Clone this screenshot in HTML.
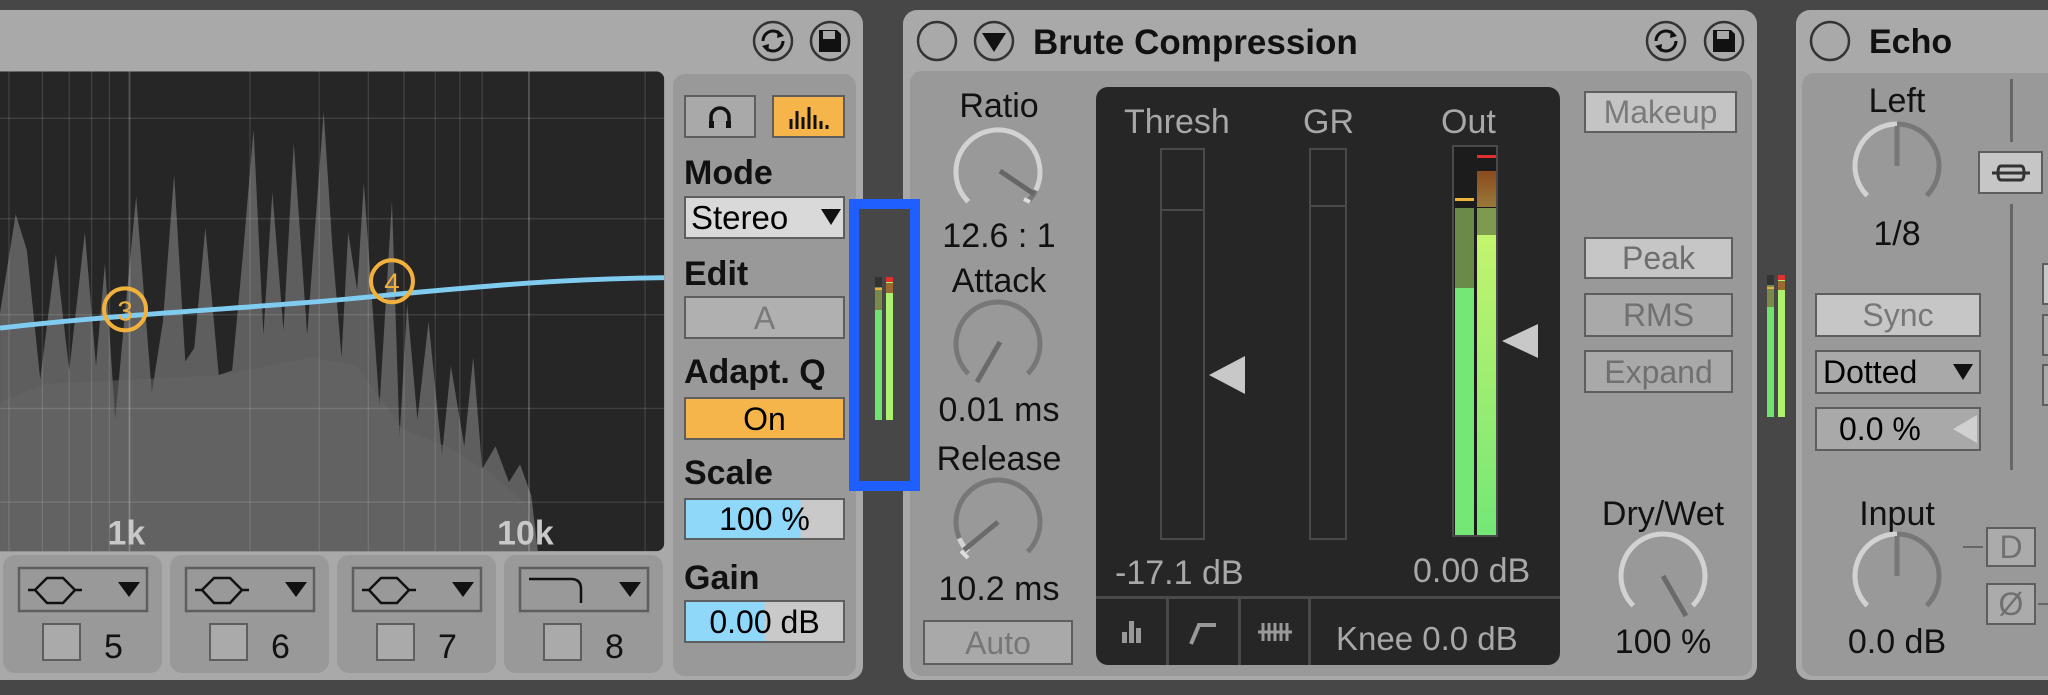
<!DOCTYPE html>
<html><head><meta charset="utf-8">
<style>
*{margin:0;padding:0;box-sizing:border-box}
body{width:2048px;height:695px;background:#474747;position:relative;overflow:hidden;font-family:"Liberation Sans",sans-serif;}
.a{position:absolute}
.t{position:absolute;white-space:nowrap;line-height:1;font-size:34px;color:#111}
.b{font-weight:bold}
.btn{position:absolute;border:2px solid #5e5e5e;display:flex;align-items:center;justify-content:center;font-size:32px;line-height:1;white-space:nowrap}
svg{position:absolute;overflow:visible}
</style></head><body>

<!-- Panel 1 -->
<div class="a" style="left:-20px;top:10px;width:883px;height:670px;background:#a9a9a9;border-radius:14px"></div>
<svg style="left:751px;top:19px" width="44" height="44" viewBox="0 0 44 44"><circle cx="22" cy="22" r="19" fill="#a9a9a9" stroke="#333" stroke-width="2.5"/><path d="M12 22 A10 10 0 0 1 30 16 M32 22 A10 10 0 0 1 14 28" fill="none" stroke="#111" stroke-width="3"/><path d="M27 11 L33 17 L26 19Z M17 33 L11 27 L18 25Z" fill="#111"/></svg>
<svg style="left:808px;top:19px" width="44" height="44" viewBox="0 0 44 44"><circle cx="22" cy="22" r="19" fill="#a9a9a9" stroke="#333" stroke-width="2.5"/><path d="M11 11 H29 L33 15 V33 H11Z" fill="#111"/><rect x="15" y="12" width="12" height="8" fill="#a9a9a9"/></svg>

<!-- EQ display -->
<svg style="left:0;top:0" width="700" height="695" viewBox="0 0 1568 1557">
<defs><clipPath id="eqc"><rect x="-40" y="160" width="1528" height="1075" rx="18"/></clipPath></defs>
<g clip-path="url(#eqc)">
<rect x="-40" y="160" width="1528" height="1075" fill="#262626"/>
<polygon fill="#5e5e5e" points="0,700 35,480 60,560 90,850 125,570 155,830 190,520 215,820 235,590 258,940 280,700 305,440 340,880 365,720 390,390 415,810 435,780 460,510 490,840 520,830 545,560 568,290 590,750 610,430 635,740 658,320 688,750 725,250 745,560 765,800 780,520 800,650 815,410 850,910 878,450 895,980 912,680 935,940 960,720 990,1020 1010,820 1040,1000 1060,800 1080,1050 1110,1000 1140,1080 1165,1040 1190,1110 1205,1235 0,1235"/>
<polygon fill="#666" opacity="0.5" points="0,900 100,860 300,850 500,840 700,800 800,820 900,960 1000,1000 1100,1060 1180,1130 1205,1235 0,1235"/>
<g stroke="rgba(255,255,255,0.12)" stroke-width="3">
<line x1="20" y1="160" x2="20" y2="1235"/><line x1="95" y1="160" x2="95" y2="1235"/><line x1="155" y1="160" x2="155" y2="1235"/><line x1="205" y1="160" x2="205" y2="1235"/><line x1="245" y1="160" x2="245" y2="1235"/>
<line x1="560" y1="160" x2="560" y2="1235"/><line x1="715" y1="160" x2="715" y2="1235"/><line x1="825" y1="160" x2="825" y2="1235"/><line x1="905" y1="160" x2="905" y2="1235"/><line x1="975" y1="160" x2="975" y2="1235"/><line x1="1030" y1="160" x2="1030" y2="1235"/><line x1="1080" y1="160" x2="1080" y2="1235"/><line x1="1445" y1="160" x2="1445" y2="1235"/>
<line x1="0" y1="265" x2="1488" y2="265"/><line x1="0" y1="490" x2="1488" y2="490"/><line x1="0" y1="705" x2="1488" y2="705"/><line x1="0" y1="915" x2="1488" y2="915"/><line x1="0" y1="1125" x2="1488" y2="1125"/>
</g>
<g stroke="rgba(255,255,255,0.22)" stroke-width="4"><line x1="290" y1="160" x2="290" y2="1235"/><line x1="1185" y1="160" x2="1185" y2="1235"/></g>
<path d="M0 735 C300 700 600 690 878 660 C1100 640 1250 625 1488 622" fill="none" stroke="#80ccf0" stroke-width="11"/>
<circle cx="280" cy="693" r="47" fill="none" stroke="#f2b13c" stroke-width="9"/>
<circle cx="878" cy="630" r="47" fill="none" stroke="#f2b13c" stroke-width="9"/>
<text x="280" y="718" font-size="62" fill="#f2b13c" text-anchor="middle" font-family="Liberation Sans">3</text>
<text x="878" y="655" font-size="62" fill="#f2b13c" text-anchor="middle" font-family="Liberation Sans">4</text>
<text x="283" y="1220" font-size="76" fill="#c8c8c8" text-anchor="middle" font-weight="bold" font-family="Liberation Sans">1k</text>
<text x="1177" y="1220" font-size="76" fill="#c8c8c8" text-anchor="middle" font-weight="bold" font-family="Liberation Sans">10k</text>
</g>
</svg>

<!-- band boxes -->
<div class="a" style="left:3px;top:555px;width:159px;height:118px;background:#999;border-radius:12px"></div>
<div class="a" style="left:170px;top:555px;width:159px;height:118px;background:#999;border-radius:12px"></div>
<div class="a" style="left:337px;top:555px;width:159px;height:118px;background:#999;border-radius:12px"></div>
<div class="a" style="left:504px;top:555px;width:159px;height:118px;background:#999;border-radius:12px"></div>

<svg style="left:18px;top:567px" width="130" height="45" viewBox="0 0 130 45"><rect x="1" y="1" width="128" height="43" fill="#999" stroke="#5e5e5e" stroke-width="2.5"/><path d="M10 23 H17 L29 11 H45 L57 23 L45 36 H29 L17 23 M57 23 H64" fill="none" stroke="#111" stroke-width="2.5"/><path d="M100 15 H122 L111 30Z" fill="#111"/></svg>
<svg style="left:185px;top:567px" width="130" height="45" viewBox="0 0 130 45"><rect x="1" y="1" width="128" height="43" fill="#999" stroke="#5e5e5e" stroke-width="2.5"/><path d="M10 23 H17 L29 11 H45 L57 23 L45 36 H29 L17 23 M57 23 H64" fill="none" stroke="#111" stroke-width="2.5"/><path d="M100 15 H122 L111 30Z" fill="#111"/></svg>
<svg style="left:352px;top:567px" width="130" height="45" viewBox="0 0 130 45"><rect x="1" y="1" width="128" height="43" fill="#999" stroke="#5e5e5e" stroke-width="2.5"/><path d="M10 23 H17 L29 11 H45 L57 23 L45 36 H29 L17 23 M57 23 H64" fill="none" stroke="#111" stroke-width="2.5"/><path d="M100 15 H122 L111 30Z" fill="#111"/></svg>
<svg style="left:519px;top:567px" width="130" height="45" viewBox="0 0 130 45"><rect x="1" y="1" width="128" height="43" fill="#999" stroke="#5e5e5e" stroke-width="2.5"/><path d="M10 12 H52 Q62 12 62 22 V36" fill="none" stroke="#111" stroke-width="2.5"/><path d="M100 15 H122 L111 30Z" fill="#111"/></svg>

<div class="a" style="left:42px;top:623px;width:39px;height:38px;background:#aaa;border:2px solid #5e5e5e"></div>
<div class="a" style="left:209px;top:623px;width:39px;height:38px;background:#aaa;border:2px solid #5e5e5e"></div>
<div class="a" style="left:376px;top:623px;width:39px;height:38px;background:#aaa;border:2px solid #5e5e5e"></div>
<div class="a" style="left:543px;top:623px;width:39px;height:38px;background:#aaa;border:2px solid #5e5e5e"></div>
<div class="t" style="left:104px;top:630px;font-size:34px">5</div>
<div class="t" style="left:271px;top:630px;font-size:34px">6</div>
<div class="t" style="left:438px;top:630px;font-size:34px">7</div>
<div class="t" style="left:605px;top:630px;font-size:34px">8</div>

<!-- right column panel1 -->
<div class="a" style="left:673px;top:74px;width:183px;height:602px;background:#999;border-radius:12px"></div>
<div class="btn" style="left:684px;top:95px;width:72px;height:43px;background:#a9a9a9"></div>
<svg style="left:705px;top:102px" width="30" height="30" viewBox="0 0 30 30"><path d="M6 24 V15 A9 9 0 0 1 24 15 V24" fill="none" stroke="#111" stroke-width="3.5"/><rect x="4" y="19" width="5" height="7" fill="#111"/><rect x="21" y="19" width="5" height="7" fill="#111"/></svg>
<div class="btn" style="left:772px;top:95px;width:73px;height:43px;background:#f5b54a"></div>
<svg style="left:787px;top:103px" width="44" height="28" viewBox="0 0 44 28"><g stroke="#111" stroke-width="3"><line x1="4" y1="26" x2="4" y2="16"/><line x1="10" y1="26" x2="10" y2="8"/><line x1="16" y1="26" x2="16" y2="14"/><line x1="22" y1="26" x2="22" y2="4"/><line x1="28" y1="26" x2="28" y2="12"/><line x1="34" y1="26" x2="34" y2="18"/><line x1="40" y1="26" x2="40" y2="22"/></g></svg>
<div class="t b" style="left:684px;top:156px">Mode</div>
<div class="btn" style="left:684px;top:196px;width:161px;height:43px;background:#d9d9d9;justify-content:flex-start;padding-left:5px;font-size:33px">Stereo</div>
<svg style="left:820px;top:208px" width="22" height="18"><path d="M1 1 H21 L11 17Z" fill="#111"/></svg>
<div class="t b" style="left:684px;top:257px">Edit</div>
<div class="btn" style="left:684px;top:296px;width:161px;height:43px;background:#b0b0b0;color:#7a7a7a">A</div>
<div class="t b" style="left:684px;top:355px">Adapt. Q</div>
<div class="btn" style="left:684px;top:397px;width:161px;height:43px;background:#f5b54a">On</div>
<div class="t b" style="left:684px;top:456px">Scale</div>
<div class="btn" style="left:684px;top:498px;width:161px;height:42px;background:linear-gradient(90deg,#8fd8fa 0 73%,#c9c9c9 73%)">100 %</div>
<div class="t b" style="left:684px;top:561px">Gain</div>
<div class="btn" style="left:684px;top:600px;width:161px;height:43px;background:linear-gradient(90deg,#8fd8fa 0 50%,#c9c9c9 50%)">0.00 dB</div>

<!-- Panel 2 -->
<div class="a" style="left:903px;top:10px;width:854px;height:670px;background:#a9a9a9;border-radius:14px"></div>
<div class="a" style="left:910px;top:71px;width:842px;height:605px;background:#999;border-radius:12px"></div>
<svg style="left:915px;top:19px" width="44" height="44" viewBox="0 0 44 44"><circle cx="22" cy="22" r="19" fill="#a9a9a9" stroke="#333" stroke-width="2.5"/></svg>
<svg style="left:972px;top:19px" width="44" height="44" viewBox="0 0 44 44"><circle cx="22" cy="22" r="19" fill="#a9a9a9" stroke="#333" stroke-width="2.5"/><path d="M10 14 H34 L22 33Z" fill="#111"/></svg>
<div class="t b" style="left:1033px;top:25px;font-size:35px">Brute Compression</div>
<svg style="left:1644px;top:19px" width="44" height="44" viewBox="0 0 44 44"><circle cx="22" cy="22" r="19" fill="#a9a9a9" stroke="#333" stroke-width="2.5"/><path d="M12 22 A10 10 0 0 1 30 16 M32 22 A10 10 0 0 1 14 28" fill="none" stroke="#111" stroke-width="3"/><path d="M27 11 L33 17 L26 19Z M17 33 L11 27 L18 25Z" fill="#111"/></svg>
<svg style="left:1702px;top:19px" width="44" height="44" viewBox="0 0 44 44"><circle cx="22" cy="22" r="19" fill="#a9a9a9" stroke="#333" stroke-width="2.5"/><path d="M11 11 H29 L33 15 V33 H11Z" fill="#111"/><rect x="15" y="12" width="12" height="8" fill="#a9a9a9"/></svg>

<!-- meter in blue box (on top of panel edge) -->
<div class="a" style="left:856px;top:206px;width:57px;height:278px;background:#474747"></div>
<div class="a" style="left:875px;top:277px;width:7px;height:143px;background:#6fe26f"></div>
<div class="a" style="left:875px;top:277px;width:7px;height:33px;background:#7a8a4a"></div>
<div class="a" style="left:875px;top:277px;width:7px;height:10px;background:#333"></div>
<div class="a" style="left:875px;top:288px;width:7px;height:2px;background:#e9b23a"></div>
<div class="a" style="left:886px;top:277px;width:7px;height:143px;background:#aef06f"></div>
<div class="a" style="left:886px;top:277px;width:7px;height:5px;background:#e03030"></div>
<div class="a" style="left:886px;top:283px;width:7px;height:10px;background:#9a6a30"></div>
<div class="a" style="left:849px;top:199px;width:71px;height:292px;border:10px solid #1f5fff"></div>

<!-- knobs column -->
<div class="t" style="left:949px;top:89px;width:100px;text-align:center">Ratio</div>
<svg style="left:948px;top:122px" width="100" height="100" viewBox="0 0 100 100"><path d="M20.3 79.7 A42 42 0 1 1 87.7 68.4" fill="none" stroke="#d2d2d2" stroke-width="5"/><path d="M87.7 68.4 A42 42 0 0 1 79.7 79.7" fill="none" stroke="#777" stroke-width="5"/><line x1="52" y1="49" x2="86" y2="72" stroke="#666" stroke-width="5"/><line x1="76" y1="77" x2="82" y2="80" stroke="#ddd" stroke-width="4"/></svg>
<div class="t" style="left:939px;top:219px;width:120px;text-align:center">12.6 : 1</div>
<div class="t" style="left:939px;top:264px;width:120px;text-align:center">Attack</div>
<svg style="left:948px;top:294px" width="100" height="100" viewBox="0 0 100 100"><path d="M20.3 79.7 A42 42 0 1 1 79.7 79.7" fill="none" stroke="#777" stroke-width="5"/><line x1="52" y1="48" x2="29" y2="88" stroke="#6a6a6a" stroke-width="5"/></svg>
<div class="t" style="left:929px;top:393px;width:140px;text-align:center">0.01 ms</div>
<div class="t" style="left:929px;top:442px;width:140px;text-align:center">Release</div>
<svg style="left:948px;top:472px" width="100" height="100" viewBox="0 0 100 100"><path d="M20.3 79.7 A42 42 0 1 1 79.7 79.7" fill="none" stroke="#777" stroke-width="5"/><path d="M20.3 79.7 A42 42 0 0 1 11.3 66.4" fill="none" stroke="#d2d2d2" stroke-width="5"/><line x1="50" y1="50" x2="16" y2="78" stroke="#6a6a6a" stroke-width="5"/><line x1="13" y1="79" x2="20" y2="86" stroke="#ddd" stroke-width="4"/></svg>
<div class="t" style="left:929px;top:572px;width:140px;text-align:center">10.2 ms</div>
<div class="btn" style="left:923px;top:620px;width:150px;height:45px;background:#a9a9a9;color:#777">Auto</div>

<!-- display -->
<div class="a" style="left:1096px;top:87px;width:464px;height:578px;background:#262626;border-radius:12px"></div>
<div class="t" style="left:1124px;top:105px;color:#a8a8a8">Thresh</div>
<div class="t" style="left:1303px;top:105px;color:#a8a8a8">GR</div>
<div class="t" style="left:1441px;top:105px;color:#a8a8a8">Out</div>
<div class="a" style="left:1160px;top:148px;width:45px;height:392px;border:2px solid #4a4a4a"></div>
<div class="a" style="left:1162px;top:209px;width:41px;height:2px;background:#4a4a4a"></div>
<div class="a" style="left:1309px;top:148px;width:38px;height:392px;border:2px solid #4a4a4a"></div>
<div class="a" style="left:1311px;top:205px;width:34px;height:2px;background:#4a4a4a"></div>
<svg style="left:1209px;top:356px" width="36" height="38"><path d="M0 19 L36 0 V38Z" fill="#c8c8c8"/></svg>
<div class="a" style="left:1452px;top:145px;width:46px;height:392px;border:2px solid #4a4a4a;background:#1c1c1c"></div>
<div class="a" style="left:1455px;top:208px;width:19px;height:327px;background:#6a8a4a"></div>
<div class="a" style="left:1455px;top:288px;width:19px;height:247px;background:#74e776"></div>
<div class="a" style="left:1455px;top:198px;width:19px;height:3px;background:#f0b33a"></div>
<div class="a" style="left:1477px;top:155px;width:19px;height:3px;background:#e03030"></div>
<div class="a" style="left:1477px;top:171px;width:19px;height:36px;background:linear-gradient(#8a4a1e,#9a7a3a)"></div>
<div class="a" style="left:1477px;top:208px;width:19px;height:327px;background:#7e9a4e"></div>
<div class="a" style="left:1477px;top:235px;width:19px;height:300px;background:linear-gradient(#c4f46e,#74e776)"></div>
<svg style="left:1502px;top:324px" width="36" height="34"><path d="M0 17 L36 0 V34Z" fill="#c8c8c8"/></svg>
<div class="t" style="left:1115px;top:556px;color:#a8a8a8">-17.1 dB</div>
<div class="t" style="left:1413px;top:554px;color:#a8a8a8">0.00 dB</div>
<div class="a" style="left:1096px;top:596px;width:464px;height:3px;background:#4a4a4a"></div>
<div class="a" style="left:1166px;top:599px;width:3px;height:66px;background:#4a4a4a"></div>
<div class="a" style="left:1238px;top:599px;width:3px;height:66px;background:#4a4a4a"></div>
<div class="a" style="left:1308px;top:599px;width:3px;height:66px;background:#4a4a4a"></div>
<svg style="left:1120px;top:618px" width="24" height="26"><g fill="#999"><rect x="2" y="14" width="5" height="11"/><rect x="9" y="3" width="5" height="22"/><rect x="16" y="10" width="5" height="15"/></g></svg>
<svg style="left:1188px;top:620px" width="30" height="26"><path d="M3 24 L11 5 H28" fill="none" stroke="#999" stroke-width="4"/></svg>
<svg style="left:1257px;top:620px" width="36" height="24"><g stroke="#999" stroke-width="3"><line x1="1" y1="12" x2="35" y2="12"/><line x1="6" y1="3" x2="6" y2="21"/><line x1="12" y1="3" x2="12" y2="21"/><line x1="18" y1="3" x2="18" y2="21"/><line x1="24" y1="3" x2="24" y2="21"/><line x1="30" y1="3" x2="30" y2="21"/></g></svg>
<div class="t" style="left:1336px;top:622px;color:#a8a8a8;font-size:33px">Knee 0.0 dB</div>

<!-- right buttons -->
<div class="btn" style="left:1584px;top:91px;width:153px;height:42px;background:#c4c4c4;color:#7a7a7a">Makeup</div>
<div class="btn" style="left:1584px;top:237px;width:149px;height:42px;background:#c6c6c6;color:#6e6e6e">Peak</div>
<div class="btn" style="left:1584px;top:293px;width:149px;height:44px;background:#a9a9a9;color:#707070">RMS</div>
<div class="btn" style="left:1584px;top:350px;width:149px;height:43px;background:#a9a9a9;color:#707070">Expand</div>
<div class="t" style="left:1588px;top:497px;width:150px;text-align:center">Dry/Wet</div>
<svg style="left:1613px;top:526px" width="100" height="100" viewBox="0 0 100 100"><path d="M20.3 79.7 A42 42 0 1 1 79.7 79.7" fill="none" stroke="#d2d2d2" stroke-width="5"/><line x1="50" y1="50" x2="73" y2="90" stroke="#6a6a6a" stroke-width="5"/></svg>
<div class="t" style="left:1603px;top:625px;width:120px;text-align:center">100 %</div>

<!-- small meter -->
<div class="a" style="left:1767px;top:275px;width:7px;height:142px;background:#6fe26f"></div>
<div class="a" style="left:1767px;top:275px;width:7px;height:32px;background:#7a8a4a"></div>
<div class="a" style="left:1767px;top:275px;width:7px;height:10px;background:#333"></div>
<div class="a" style="left:1767px;top:287px;width:7px;height:2px;background:#e9b23a"></div>
<div class="a" style="left:1778px;top:275px;width:7px;height:142px;background:#aef06f"></div>
<div class="a" style="left:1778px;top:275px;width:7px;height:5px;background:#e03030"></div>
<div class="a" style="left:1778px;top:281px;width:7px;height:9px;background:#9a6a30"></div>

<!-- Panel 3 Echo -->
<div class="a" style="left:1796px;top:10px;width:300px;height:670px;background:#a9a9a9;border-radius:14px"></div>
<div class="a" style="left:1802px;top:73px;width:290px;height:603px;background:#999;border-radius:12px"></div>
<svg style="left:1808px;top:19px" width="44" height="44" viewBox="0 0 44 44"><circle cx="22" cy="22" r="19" fill="#a9a9a9" stroke="#333" stroke-width="2.5"/></svg>
<div class="t b" style="left:1869px;top:25px;font-size:34px">Echo</div>
<div class="t" style="left:1847px;top:84px;width:100px;text-align:center">Left</div>
<svg style="left:1847px;top:116px" width="100" height="100" viewBox="0 0 100 100"><path d="M20.3 79.7 A42 42 0 0 1 50 8" fill="none" stroke="#d2d2d2" stroke-width="5"/><path d="M50 8 A42 42 0 0 1 79.7 79.7" fill="none" stroke="#777" stroke-width="5"/><line x1="50" y1="10" x2="50" y2="50" stroke="#777" stroke-width="5"/></svg>
<div class="t" style="left:1847px;top:217px;width:100px;text-align:center">1/8</div>
<div class="a" style="left:2010px;top:79px;width:3px;height:63px;background:#666"></div>
<div class="a" style="left:2010px;top:204px;width:3px;height:266px;background:#666"></div>
<div class="btn" style="left:1978px;top:151px;width:65px;height:43px;background:#c6c6c6"></div>
<svg style="left:1990px;top:160px" width="42" height="26"><path d="M2 13 H40 M11 6 H31 Q34 6 34 13 Q34 20 31 20 H11 Q8 20 8 13 Q8 6 11 6Z" fill="none" stroke="#333" stroke-width="3"/></svg>
<div class="btn" style="left:1815px;top:293px;width:166px;height:44px;background:#c6c6c6;color:#777">Sync</div>
<div class="btn" style="left:1815px;top:350px;width:166px;height:44px;background:#a9a9a9;justify-content:flex-start;padding-left:6px">Dotted</div>
<svg style="left:1952px;top:363px" width="22" height="18"><path d="M1 1 H21 L11 17Z" fill="#111"/></svg>
<div class="btn" style="left:1815px;top:407px;width:166px;height:44px;background:#a9a9a9;justify-content:flex-start;padding-left:22px">0.0 %</div>
<svg style="left:1953px;top:415px" width="24" height="28"><path d="M0 14 L24 0 V28Z" fill="#d0d0d0"/></svg>
<div class="btn" style="left:2042px;top:263px;width:30px;height:42px;background:#c6c6c6"></div>
<div class="btn" style="left:2042px;top:314px;width:30px;height:42px;background:#a9a9a9"></div>
<div class="btn" style="left:2042px;top:364px;width:30px;height:42px;background:#a9a9a9"></div>
<div class="t" style="left:1842px;top:497px;width:110px;text-align:center">Input</div>
<svg style="left:1847px;top:526px" width="100" height="100" viewBox="0 0 100 100"><path d="M20.3 79.7 A42 42 0 0 1 50 8" fill="none" stroke="#d2d2d2" stroke-width="5"/><path d="M50 8 A42 42 0 0 1 79.7 79.7" fill="none" stroke="#777" stroke-width="5"/><line x1="50" y1="10" x2="50" y2="50" stroke="#777" stroke-width="5"/></svg>
<div class="t" style="left:1842px;top:625px;width:110px;text-align:center">0.0 dB</div>
<div class="a" style="left:1963px;top:546px;width:20px;height:2px;background:#666"></div>
<div class="btn" style="left:1986px;top:527px;width:50px;height:40px;background:#ababab;color:#707070">D</div>
<div class="btn" style="left:1986px;top:583px;width:50px;height:42px;background:#ababab;color:#707070">Ø</div>
<div class="a" style="left:2038px;top:603px;width:10px;height:2px;background:#666"></div>

</body></html>
